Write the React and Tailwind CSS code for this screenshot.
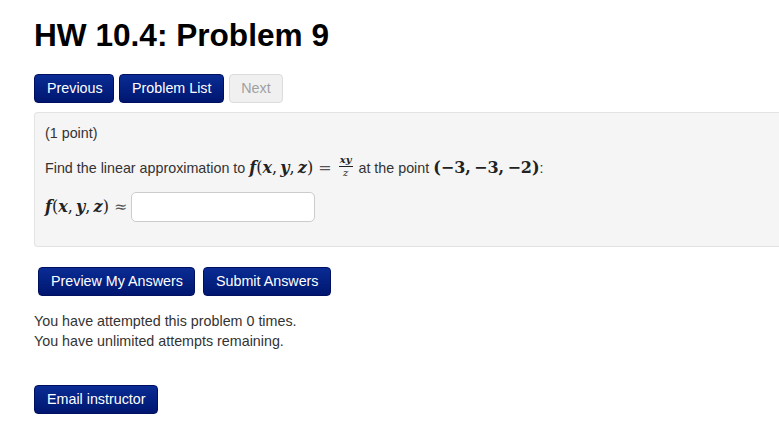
import React from 'react';

const btn =
  'h-[29px] px-[12px] whitespace-nowrap rounded-[4px] border border-[#001060] bg-gradient-to-b from-[#0b2c94] to-[#001670] text-white text-[14.3px] leading-none';

const mathFont = { fontFamily: '"DejaVu Serif", "Liberation Serif", serif' };

export default function App() {
  return (
    <div className="min-h-[437px] bg-white text-[#333] font-['Liberation_Sans',Arial,sans-serif] overflow-hidden">
      <div className="pl-[34px] pt-[17px]">
        {/* title */}
        <h1 className="text-[31.6px] font-bold text-black leading-[36px]">
          HW 10.4: Problem 9
        </h1>

        {/* nav buttons */}
        <div className="flex gap-[5px] mt-[21px]">
          <button className={`${btn} w-[80px]`}>Previous</button>
          <button className={`${btn} w-[105px]`}>Problem List</button>
          <button className="h-[29px] w-[54px] rounded-[4px] border border-[#dcdcdc] bg-[#f0f0f0] text-[#a0a0a0] text-[14.3px] leading-none">
            Next
          </button>
        </div>

        {/* problem box */}
        <div className="mt-[9px] h-[135px] bg-[#f5f5f5] border border-[#e3e3e3] border-r-0 rounded-l-[4px] pl-[10px] pt-[11px] text-[14.3px]">
          <p className="leading-[18px]">(1 point)</p>
          <p className="mt-[16px] flex items-center leading-[20px] whitespace-nowrap">
            <span>Find the linear approximation to&nbsp;</span>
            <span style={mathFont} className="text-[16px] text-[#222]">
              <b><i>f</i></b>(<b><i>x</i></b>,&thinsp;<b><i>y</i></b>,&thinsp;<b><i>z</i></b>)&nbsp;<span className="text-[#555]">=</span>&nbsp;
            </span>
            <span style={mathFont} className="inline-flex flex-col items-center text-[10px] font-bold italic leading-[10px] text-[#222] mx-[2px] -mt-[4px]">
              <span className="px-[1px]">xy</span>
              <span className="h-px w-full bg-[#222] my-[1px]" />
              <span className="font-normal">z</span>
            </span>
            <span>&nbsp;at the point&nbsp;</span>
            <span style={mathFont} className="text-[16px] font-bold text-[#222]">(−3,&thinsp;−3,&thinsp;−2)</span>
            <span>:</span>
          </p>
          <div className="mt-[14px] flex items-center">
            <span style={mathFont} className="text-[16px] text-[#222] whitespace-nowrap">
              <b><i>f</i></b>(<b><i>x</i></b>,&thinsp;<b><i>y</i></b>,&thinsp;<b><i>z</i></b>) <span className="text-[#555]">≈</span>
            </span>
            <input
              className="ml-[4px] w-[184px] h-[30px] bg-white border border-[#cccccc] rounded-[5px] outline-none"
              type="text"
            />
          </div>
        </div>

        {/* submit buttons */}
        <div className="flex gap-[8px] mt-[20px] ml-[4px]">
          <button className={`${btn} w-[157px]`}>Preview My Answers</button>
          <button className={`${btn} w-[128px]`}>Submit Answers</button>
        </div>

        <div className="mt-[15px] text-[14.3px] leading-[20px] text-[#333]">
          <p>You have attempted this problem 0 times.</p>
          <p>You have unlimited attempts remaining.</p>
        </div>

        <button className={`${btn} w-[124px] mt-[34px]`}>Email instructor</button>
      </div>
    </div>
  );
}
